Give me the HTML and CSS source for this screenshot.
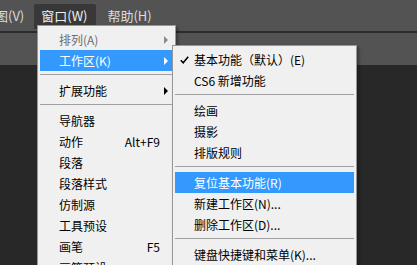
FILE: index.html
```html
<!DOCTYPE html>
<html lang="zh-CN">
<head>
    <meta charset="UTF-8">
    <title>窗口菜单</title>
    <link rel="stylesheet" href="styles.css">
</head>
<body>
    <div class="menubar">
        <span class="bar-item first">视图(V)</span>
        <span class="bar-item open">窗口(W)</span>
        <span class="bar-item">帮助(H)</span>
    </div>
    <div class="optionsbar"></div>
    <div class="workspace"></div>

    <div class="menu main-menu">
        <div class="item disabled">排列(A)<span class="arrow"></span></div>
        <div class="item active">工作区(K)<span class="arrow"></span></div>
        <div class="sep"></div>
        <div class="item">扩展功能<span class="arrow"></span></div>
        <div class="sep"></div>
        <div class="item">导航器</div>
        <div class="item">动作<span class="key">Alt+F9</span></div>
        <div class="item">段落</div>
        <div class="item">段落样式</div>
        <div class="item">仿制源</div>
        <div class="item">工具预设</div>
        <div class="item">画笔<span class="key">F5</span></div>
        <div class="item">画笔预设</div>
    </div>

    <div class="menu sub-menu">
        <div class="item">
            <svg class="check" width="9" height="8" viewBox="0 0 9 8"><path d="M0.8 4.2 L3.2 6.8 L8.2 0.8" fill="none" stroke="#000" stroke-width="1.6"/></svg>
            基本功能（默认）(E)
        </div>
        <div class="item">CS6 新增功能</div>
        <div class="sep"></div>
        <div class="item">绘画</div>
        <div class="item">摄影</div>
        <div class="item">排版规则</div>
        <div class="sep"></div>
        <div class="item active">复位基本功能(R)</div>
        <div class="item">新建工作区(N)...</div>
        <div class="item">删除工作区(D)...</div>
        <div class="sep"></div>
        <div class="item">键盘快捷键和菜单(K)...</div>
    </div>
</body>
</html>
```

FILE: styles.css
```css
html, body {
    margin: 0;
    padding: 0;
    height: 100%;
    overflow: hidden;
}
body {
    font-family: "Noto Sans CJK SC", "Noto Sans", sans-serif;
    background-color: #282828;
    position: relative;
}
.menubar {
    height: 31px;
    background-color: #535353;
    border-bottom: 2px solid #2b2b2b;
    display: flex;
    align-items: flex-end;
    font-size: 13px;
    color: #dcdcdc;
    box-sizing: border-box;
    height: 33px;
    padding-bottom: 2px;
}
.bar-item {
    height: 25px;
    line-height: 23px;
    padding: 0 8px;
    margin-right: 3px;
}
.bar-item.first {
    margin-left: -18px;
    padding-left: 0;
    margin-right: 2px;
}
.bar-item.open {
    background-color: #383838;
    border-radius: 2px 2px 0 0;
    color: #f0f0f0;
    padding: 0 9px 0 7px;
}
.optionsbar {
    height: 32px;
    background-color: #535353;
}
.workspace {
    height: 200px;
    background-color: #282828;
}
.menu {
    position: absolute;
    background-color: #f0f0f0;
    border: 1px solid #979797;
    padding: 3px 2px;
    font-size: 12px;
    color: #000;
    box-shadow: 2px 2px 3px rgba(0, 0, 0, 0.35);
}
.main-menu {
    left: 37px;
    top: 25px;
    width: 133px;
}
.sub-menu {
    left: 172px;
    top: 45px;
    width: 179px;
}
.item {
    height: 21px;
    line-height: 21px;
    padding-left: 19px;
    position: relative;
    white-space: nowrap;
}
.item.disabled {
    color: #6d6d6d;
}
.item.active {
    background-color: #3399ff;
    color: #fff;
}
.key {
    position: absolute;
    right: 13px;
    top: 0;
}
.arrow {
    position: absolute;
    right: 5px;
    top: 7px;
    width: 0;
    height: 0;
    border-top: 4px solid transparent;
    border-bottom: 4px solid transparent;
    border-left: 4px solid #000;
}
.disabled .arrow {
    border-left-color: #8a8a8a;
}
.active .arrow {
    border-left-color: #fff;
}
.check {
    position: absolute;
    left: 5px;
    top: 7px;
}
.sep {
    height: 9px;
    box-sizing: border-box;
    padding-top: 3px;
}
.sep::before {
    content: "";
    display: block;
    border-top: 1px solid #a0a0a0;
}
```
